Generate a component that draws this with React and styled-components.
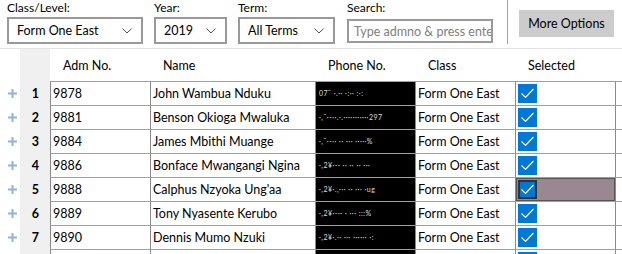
import React from "react"
import styled, { createGlobalStyle } from "styled-components"

const GlobalStyle = createGlobalStyle`
  html, body {
    margin: 0;
    padding: 0;
    background: #ffffff;
  }
  body {
    font-family: Lato, "Noto Sans", sans-serif;
    font-size: 12px;
    color: #000;
  }
  * {
    box-sizing: border-box;
  }
`

const Page = styled.div`
  width: 622px;
  height: 254px;
  overflow: hidden;
  background: #fff;
`

const Toolbar = styled.div`
  display: flex;
  align-items: flex-start;
  height: 48px;
  padding-left: 7px;
`

const Field = styled.div`
  display: flex;
  flex-direction: column;
  margin-right: ${(p) => p.gap || 11}px;
`

const Label = styled.label`
  font-size: 12px;
  line-height: 14px;
  height: 17px;
  padding-top: 1px;
  color: #000;
`

const Select = styled.div`
  display: flex;
  align-items: center;
  justify-content: space-between;
  width: ${(p) => p.w}px;
  height: 27px;
  border: 2px solid #999;
  padding: 0 9px 0 8px;
  font-size: 12.5px;
  color: #000;
  background: #fff;
`

const SearchBox = styled.div`
  display: flex;
  align-items: center;
  width: 146px;
  height: 24px;
  margin-top: 2px;
  border: 2px solid #999;
  padding: 0 5px;
  font-size: 12.5px;
  color: #808080;
  white-space: nowrap;
  overflow: hidden;
`

const Separator = styled.div`
  width: 1px;
  height: 44px;
  background: #a0a0a0;
  margin: 0 11px 0 2px;
`

const Button = styled.button`
  margin-top: 10px;
  width: 95px;
  height: 27px;
  border: none;
  background: #cccccc;
  font-family: inherit;
  font-size: 12.5px;
  color: #000;
  padding: 0;
`

const Grid = styled.div`
  border-top: 1px solid #e3e3e3;
`

const Row = styled.div`
  display: flex;
  height: ${(p) => (p.header ? 32 : 24)}px;
`

const Expander = styled.div`
  width: 20px;
  display: flex;
  align-items: center;
  justify-content: center;
  padding-left: 4px;
`

const RowNumber = styled.div`
  width: 30px;
  background: #f0f0f0;
  display: flex;
  align-items: center;
  justify-content: flex-end;
  padding-right: 11px;
  font-weight: 700;
  font-size: 12.5px;
`

const HeaderCell = styled.div`
  width: ${(p) => p.w}px;
  display: flex;
  align-items: center;
  padding-left: 13px;
  padding-top: 1px;
  font-size: 12.5px;
  color: #000;
`

const Cell = styled.div`
  width: ${(p) => p.w}px;
  display: flex;
  align-items: center;
  padding-left: ${(p) => (p.pad ?? 2)}px;
  border-top: 1px solid #a0a0a0;
  border-left: 1px solid #8a8a8a;
  font-size: 12.5px;
  white-space: nowrap;
  overflow: hidden;
  background: ${(p) => (p.dark ? "#000" : p.active ? "#9a8891" : "#fff")};
  box-shadow: ${(p) => (p.active ? "inset 0 0 0 1px #555" : "none")};
`

const LastEdge = styled.div`
  border-left: 1px solid #8a8a8a;
  border-top: 1px solid #a0a0a0;
  flex: 1;
`

const Masked = styled.span`
  color: #fff;
  font-size: 7px;
  letter-spacing: 0.5px;
  opacity: 0.85;
  line-height: 7px;
  padding-left: 3px;
`

const Check = styled.div`
  width: 19px;
  height: 19px;
  background: #0078d7;
  display: flex;
  align-items: center;
  justify-content: center;
  border: ${(p) => (p.focus ? "2px solid #333" : "none")};
`

const Chevron = () => (
  <svg width="10" height="6" viewBox="0 0 10 6">
    <polyline points="0.5,0.5 5,5 9.5,0.5" fill="none" stroke="#555" strokeWidth="1" />
  </svg>
)

const Plus = () => (
  <svg width="9" height="9" viewBox="0 0 9 9">
    <path d="M4.5 0 V9 M0 4.5 H9" stroke="#8fb4de" strokeWidth="2" />
  </svg>
)

const Tick = () => (
  <svg width="15" height="15" viewBox="0 0 15 15">
    <polyline points="1.5,7.5 5.5,11.5 13.5,3" fill="none" stroke="#fff" strokeWidth="1.2" />
  </svg>
)

const students = [
  ["9878", "John Wambua Nduku", "07¨ ·.·· ·:·· :·:"],
  ["9881", "Benson Okioga Mwaluka", "·,¨·-··.·.···········297"],
  ["9884", "James Mbithi Muange", "·,¨·-·· ·· ··· ·····%"],
  ["9886", "Bonface Mwangangi Ngina", "·,2¥·-· ··  ·· ·· ···"],
  ["9888", "Calphus Nzyoka Ung'aa", "·,2¥·.,···  ·· ··· ·ug"],
  ["9889", "Tony Nyasente Kerubo", "·,2¥·-·· ·  ··· :::%"],
  ["9890", "Dennis Mumo Nzuki", "·,2¥·.·· ··· ······ ·:"],
  ["", "", ""],
]

const App = () => {
  return (
    <Page>
      <GlobalStyle />
      <Toolbar>
        <Field>
          <Label>Class/Level:</Label>
          <Select w={136}>
            Form One East
            <Chevron />
          </Select>
        </Field>
        <Field>
          <Label>Year:</Label>
          <Select w={73}>
            2019
            <Chevron />
          </Select>
        </Field>
        <Field gap={12}>
          <Label>Term:</Label>
          <Select w={97}>
            All Terms
            <Chevron />
          </Select>
        </Field>
        <Field gap={12}>
          <Label>Search:</Label>
          <SearchBox>Type admno &amp; press enter</SearchBox>
        </Field>
        <Separator />
        <Button>More Options</Button>
      </Toolbar>

      <Grid>
        <Row header>
          <Expander />
          <RowNumber />
          <HeaderCell w={100}>Adm No.</HeaderCell>
          <HeaderCell w={165}>Name</HeaderCell>
          <HeaderCell w={100}>Phone No.</HeaderCell>
          <HeaderCell w={100}>Class</HeaderCell>
          <HeaderCell w={100}>Selected</HeaderCell>
        </Row>
        {students.map(([adm, name, phone], i) => (
          <Row key={i}>
            <Expander>{adm && <Plus />}</Expander>
            <RowNumber>{adm ? i + 1 : ""}</RowNumber>
            <Cell w={100}>{adm}</Cell>
            <Cell w={165}>{name}</Cell>
            <Cell w={100} dark pad={0}>
              <Masked>{phone}</Masked>
            </Cell>
            <Cell w={100}>{adm && "Form One East"}</Cell>
            <Cell w={100} pad={2} active={i === 4}>
              <Check focus={i === 4}>
                <Tick />
              </Check>
            </Cell>
            <LastEdge />
          </Row>
        ))}
      </Grid>
    </Page>
  )
}

export default App
